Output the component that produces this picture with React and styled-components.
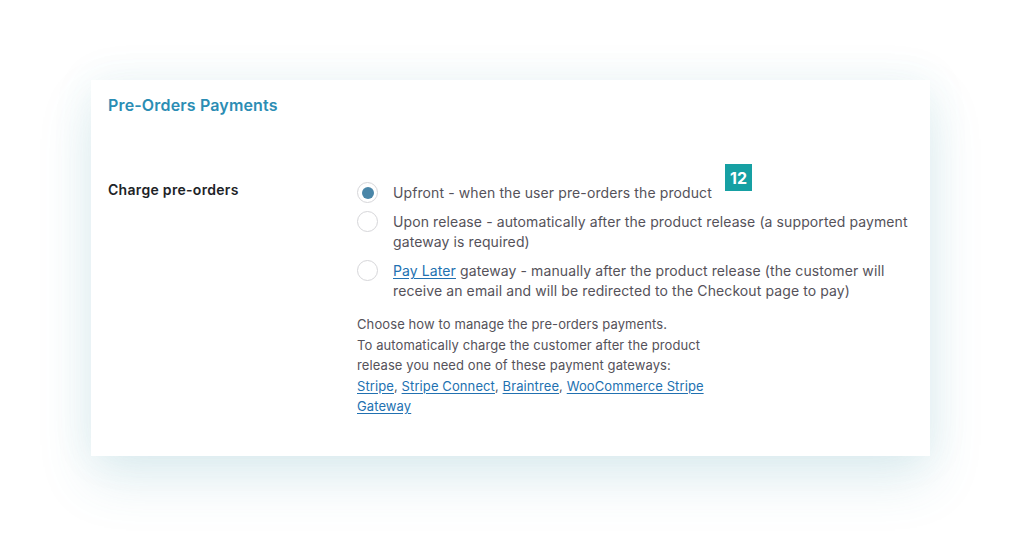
import React from "react";
import styled, { createGlobalStyle } from "styled-components";

const Global = createGlobalStyle`
  html, body { margin: 0; padding: 0; background: #ffffff; }
  body { font-family: Inter, "Open Sans", "Liberation Sans", sans-serif; }
  * { box-sizing: border-box; }
`;

const Page = styled.div`
  width: 1024px;
  height: 542px;
  padding: 80px 0 0 91px;
  overflow: hidden;
  background: #ffffff;
`;

const Card = styled.section`
  position: relative;
  width: 839px;
  height: 376px;
  background: #ffffff;
  padding: 13px 17px;
  box-shadow: 0 24px 50px rgba(60, 150, 170, 0.15), 0 0 40px rgba(60, 150, 170, 0.08);
`;

const Title = styled.h2`
  margin: 0;
  font-size: 16px;
  line-height: 24px;
  font-weight: 600;
  color: #2b8db4;
  letter-spacing: 0.16px;
`;

const Row = styled.div`
  display: grid;
  grid-template-columns: 249px 1fr;
  margin-top: 63px;
`;

const FieldLabel = styled.div`
  font-size: 14px;
  line-height: 20px;
  font-weight: 600;
  color: #1d2327;
  letter-spacing: 0.3px;
`;

const Options = styled.div`
  display: flex;
  flex-direction: column;
  gap: 9px;
  padding-top: 3px;
`;

const Option = styled.label`
  display: flex;
  align-items: flex-start;
  gap: 15px;
  font-size: 14px;
  line-height: 20px;
  letter-spacing: 0.1px;
  color: #55525a;
  max-width: 556px;
`;

const Radio = styled.span`
  flex: none;
  width: 21px;
  height: 21px;
  margin-top: -1px;
  border-radius: 50%;
  border: 1px solid #d6d6d9;
  background: #ffffff;
  display: flex;
  align-items: center;
  justify-content: center;
  &::after {
    content: "";
    width: 12px;
    height: 12px;
    border-radius: 50%;
    background: ${(p) => (p.$checked ? "#4a86a8" : "transparent")};
  }
`;

const Link = styled.a`
  color: #2271b1;
  text-decoration: underline;
  text-underline-offset: 2px;
`;

const Description = styled.p`
  margin: 13px 0 0;
  width: 352px;
  font-size: 13px;
  line-height: 20.5px;
  letter-spacing: 0.1px;
  color: #55525a;
`;

const Badge = styled.span`
  position: absolute;
  left: 634px;
  top: 84px;
  width: 27px;
  height: 27px;
  background: #16a0a3;
  color: #ffffff;
  font-weight: 700;
  font-size: 16px;
  display: flex;
  align-items: center;
  justify-content: center;
`;

const options = [
  { checked: true, content: "Upfront - when the user pre-orders the product" },
  {
    checked: false,
    content:
      "Upon release - automatically after the product release (a supported payment gateway is required)",
  },
  {
    checked: false,
    content: (
      <>
        <Link href="#">Pay Later</Link> gateway - manually after the product release (the
        customer will receive an email and will be redirected to the Checkout page to pay)
      </>
    ),
  },
];

export default function App() {
  return (
    <>
      <Global />
      <Page>
        <Card>
          <Title>Pre-Orders Payments</Title>
          <Row>
            <FieldLabel>Charge pre-orders</FieldLabel>
            <div>
              <Options>
                {options.map((o, i) => (
                  <Option key={i}>
                    <Radio $checked={o.checked} />
                    <span>{o.content}</span>
                  </Option>
                ))}
              </Options>
              <Description>
                Choose how to manage the pre-orders payments.
                <br />
                To automatically charge the customer after the product release you need one of
                these payment gateways:
                <br />
                <Link href="#">Stripe</Link>, <Link href="#">Stripe Connect</Link>,{" "}
                <Link href="#">Braintree</Link>, <Link href="#">WooCommerce Stripe Gateway</Link>
              </Description>
            </div>
          </Row>
          <Badge>12</Badge>
        </Card>
      </Page>
    </>
  );
}
